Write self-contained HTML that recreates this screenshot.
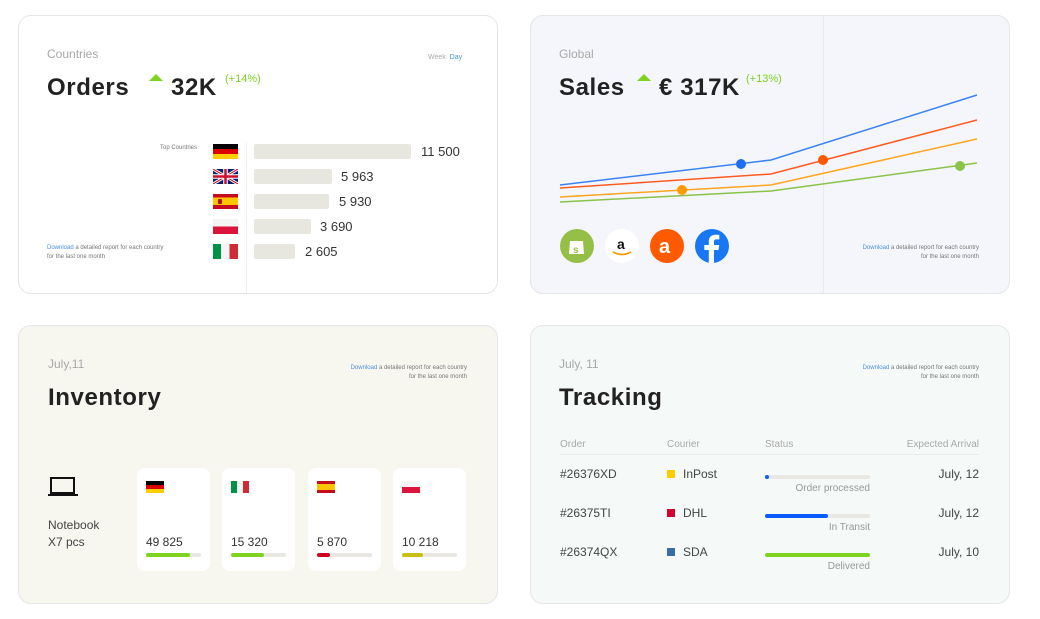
<!DOCTYPE html>
<html><head><meta charset="utf-8"><style>
*{margin:0;padding:0;box-sizing:border-box}
body{width:1040px;height:619px;background:#fff;font-family:"Liberation Sans",sans-serif;position:relative;overflow:hidden;color:#222}
.a{position:absolute;white-space:nowrap}
.card{position:absolute;border:1px solid #e4e6ea;border-radius:13px}
.lbl{font-size:12px;color:#a8a8a8}
.big{font-size:24px;color:#222;font-weight:bold;letter-spacing:.6px}
.tri{width:0;height:0;border-left:7px solid transparent;border-right:7px solid transparent;border-bottom:7px solid #7ed321}
.pct{font-size:11px;color:#7ed321}
.tiny{font-size:6px;color:#777;line-height:9px}
.tiny b{font-weight:normal;color:#4a90e2}
.bar{position:absolute;height:15px;background:#e8e7df;border-radius:2px}
.num{font-size:13px;color:#333}
.mini{position:absolute;top:468px;width:73px;height:103px;background:#fff;border-radius:8px}
.th{font-size:10px;color:#aaa}
.td{font-size:12px;color:#444}
.sl{font-size:10px;color:#999}
</style></head><body>

<!-- Card 1 -->
<div class="card" style="left:18px;top:15px;width:480px;height:279px;background:#fff"></div>
<div class="a lbl" style="left:47px;top:47px">Countries</div>
<div class="a big" style="left:47px;top:74px">Orders</div>
<div class="a tri" style="left:149px;top:74px"></div>
<div class="a big" style="left:171px;top:74px">32K</div>
<div class="a pct" style="left:225px;top:73px">(+14%)</div>
<div class="a" style="left:428px;top:54px;font-size:7px;color:#aaa">Week&nbsp;&nbsp;<span style="color:#4a90e2">Day</span></div>
<div class="a" style="left:246px;top:143px;width:1px;height:150px;background:#eee"></div>
<div class="a" style="left:160px;top:145px;font-size:6px;color:#777">Top Countries</div>
<div class="a" style="left:213px;top:144px;width:25px;height:15px;background:linear-gradient(#000 33%,#dd0000 33% 66%,#ffce00 66%)"></div>
<svg class="a" style="left:213px;top:169px" width="25" height="15" viewBox="0 0 60 36"><rect width="60" height="36" fill="#012169"/><path d="M0 0L60 36M60 0L0 36" stroke="#fff" stroke-width="7"/><path d="M0 0L60 36M60 0L0 36" stroke="#c8102e" stroke-width="2.5"/><path d="M30 0V36M0 18H60" stroke="#fff" stroke-width="11"/><path d="M30 0V36M0 18H60" stroke="#c8102e" stroke-width="6"/></svg>
<div class="a" style="left:213px;top:194px;width:25px;height:15px;background:linear-gradient(#c60b1e 25%,#ffc400 25% 75%,#c60b1e 75%)"><div style="position:absolute;left:5px;top:5px;width:4px;height:5px;background:#ad1519;border-radius:1px"></div></div>
<div class="a" style="left:213px;top:219px;width:25px;height:15px;background:linear-gradient(#f4f4f4 50%,#dc143c 50%)"></div>
<div class="a" style="left:213px;top:244px;width:25px;height:15px;background:linear-gradient(90deg,#009246 33%,#f4f4f4 33% 66%,#ce2b37 66%)"></div>
<div class="bar" style="left:254px;top:144px;width:157px"></div>
<div class="bar" style="left:254px;top:169px;width:78px"></div>
<div class="bar" style="left:254px;top:194px;width:75px"></div>
<div class="bar" style="left:254px;top:219px;width:57px"></div>
<div class="bar" style="left:254px;top:244px;width:41px"></div>
<div class="a num" style="left:421px;top:144px">11 500</div>
<div class="a num" style="left:341px;top:169px">5 963</div>
<div class="a num" style="left:339px;top:194px">5 930</div>
<div class="a num" style="left:320px;top:219px">3 690</div>
<div class="a num" style="left:305px;top:244px">2 605</div>
<div class="a tiny" style="left:47px;top:244px"><b>Download</b> a detailed report for each country<br>for the last one month</div>

<!-- Card 2 -->
<div class="card" style="left:530px;top:15px;width:480px;height:279px;background:#f4f6fb"></div>
<div class="a" style="left:823px;top:16px;width:1px;height:277px;background:#e8eaef"></div>
<div class="a lbl" style="left:559px;top:47px">Global</div>
<div class="a big" style="left:559px;top:74px">Sales</div>
<div class="a tri" style="left:637px;top:74px"></div>
<div class="a big" style="left:659px;top:74px">€ 317K</div>
<div class="a pct" style="left:746px;top:73px">(+13%)</div>
<svg class="a" style="left:0;top:0" width="1040" height="300">
<g fill="none" stroke-width="1.5">
<path d="M560 185L771 160L977 95" stroke="#3b82f6"/>
<path d="M560 188L771 174L977 120" stroke="#ff5a1f"/>
<path d="M560 197L771 185L977 139" stroke="#ffa51f"/>
<path d="M560 202L771 191L977 163" stroke="#8bc34a"/>
</g>
<circle cx="741" cy="164" r="5" fill="#1f6ff2"/>
<circle cx="823" cy="160" r="5" fill="#ff5a00"/>
<circle cx="682" cy="190" r="5" fill="#ff9a00"/>
<circle cx="960" cy="166" r="5" fill="#8bc34a"/>
<circle cx="577" cy="246" r="17" fill="#95bf47"/>
<path d="M570 241h13l1 13h-15z" fill="#fff"/><text x="573" y="253" font-size="10" font-weight="bold" fill="#95bf47" font-family="Liberation Sans">s</text>
<circle cx="622" cy="246" r="17" fill="#fff"/>
<text x="617" y="249" font-size="14" font-weight="bold" fill="#111" font-family="Liberation Sans">a</text>
<path d="M613 252q9 5 18 0" stroke="#ff9900" stroke-width="1.8" fill="none"/>
<circle cx="667" cy="246" r="17" fill="#ff5a00"/>
<text x="659" y="253" font-size="20" font-weight="bold" fill="#fff" font-family="Liberation Sans">a</text>
<circle cx="712" cy="246" r="17" fill="#1877f2"/>
<path d="M714 263v-13h4.5l.7-5h-5.2v-3.2c0-1.4.5-2.4 2.5-2.4h2.8v-4.5c-.5-.1-2.1-.2-4-.2-4 0-6.5 2.4-6.5 6.8v3.5h-4.5v5h4.5v13z" fill="#fff"/>
</svg>
<div class="a tiny" style="right:61px;top:244px;text-align:right"><b>Download</b> a detailed report for each country<br>for the last one month</div>

<!-- Card 3 -->
<div class="card" style="left:18px;top:325px;width:480px;height:279px;background:#f7f6ef"></div>
<div class="a lbl" style="left:48px;top:357px">July,11</div>
<div class="a big" style="left:48px;top:384px">Inventory</div>
<div class="a tiny" style="right:573px;top:364px;text-align:right"><b>Download</b> a detailed report for each country<br>for the last one month</div>
<svg class="a" style="left:47px;top:476px" width="32" height="22"><rect x="4" y="2" width="23" height="15" fill="none" stroke="#111" stroke-width="2"/><rect x="1" y="18" width="30" height="2" fill="#111"/></svg>
<div class="a" style="left:48px;top:517px;font-size:12px;color:#444;line-height:17px">Notebook<br>X7 pcs</div>
<div class="mini" style="left:137px"></div>
<div class="mini" style="left:222px"></div>
<div class="mini" style="left:308px"></div>
<div class="mini" style="left:393px"></div>
<div class="a" style="left:146px;top:481px;width:18px;height:12px;background:linear-gradient(#000 33%,#dd0000 33% 66%,#ffce00 66%)"></div>
<div class="a" style="left:231px;top:481px;width:18px;height:12px;background:linear-gradient(90deg,#009246 33%,#f4f4f4 33% 66%,#ce2b37 66%)"></div>
<div class="a" style="left:317px;top:481px;width:18px;height:12px;background:linear-gradient(#c60b1e 25%,#ffc400 25% 75%,#c60b1e 75%)"></div>
<div class="a" style="left:402px;top:481px;width:18px;height:12px;background:linear-gradient(#f4f4f4 50%,#dc143c 50%)"></div>
<div class="a num" style="left:146px;top:535px;font-size:12px">49 825</div>
<div class="a num" style="left:231px;top:535px;font-size:12px">15 320</div>
<div class="a num" style="left:317px;top:535px;font-size:12px">5 870</div>
<div class="a num" style="left:402px;top:535px;font-size:12px">10 218</div>
<div class="a" style="left:146px;top:553px;width:55px;height:4px;background:#e8e7e2;border-radius:2px"><div style="width:44px;height:4px;background:#7ed321;border-radius:2px"></div></div>
<div class="a" style="left:231px;top:553px;width:55px;height:4px;background:#e8e7e2;border-radius:2px"><div style="width:33px;height:4px;background:#7ed321;border-radius:2px"></div></div>
<div class="a" style="left:317px;top:553px;width:55px;height:4px;background:#e8e7e2;border-radius:2px"><div style="width:13px;height:4px;background:#d0021b;border-radius:2px"></div></div>
<div class="a" style="left:402px;top:553px;width:55px;height:4px;background:#e8e7e2;border-radius:2px"><div style="width:21px;height:4px;background:#c8c011;border-radius:2px"></div></div>

<!-- Card 4 -->
<div class="card" style="left:530px;top:325px;width:480px;height:279px;background:#f5f9f8"></div>
<div class="a lbl" style="left:559px;top:357px">July, 11</div>
<div class="a big" style="left:559px;top:384px">Tracking</div>
<div class="a tiny" style="right:61px;top:364px;text-align:right"><b>Download</b> a detailed report for each country<br>for the last one month</div>
<div class="a th" style="left:560px;top:439px">Order</div>
<div class="a th" style="left:667px;top:439px">Courier</div>
<div class="a th" style="left:765px;top:439px">Status</div>
<div class="a th" style="right:61px;top:439px">Expected Arrival</div>
<div class="a" style="left:560px;top:454px;width:419px;height:1px;background:#e8ecec"></div>

<div class="a td" style="left:560px;top:467px">#26376XD</div>
<div class="a" style="left:667px;top:470px;width:8px;height:8px;background:#ffcc00"></div>
<div class="a td" style="left:683px;top:467px">InPost</div>
<div class="a" style="left:765px;top:475px;width:105px;height:4px;background:#e8e7e2;border-radius:2px"><div style="width:4px;height:4px;background:#0b5cff;border-radius:2px"></div></div>
<div class="a sl" style="right:170px;top:483px">Order processed</div>
<div class="a td" style="right:61px;top:467px">July, 12</div>

<div class="a td" style="left:560px;top:506px">#26375TI</div>
<div class="a" style="left:667px;top:509px;width:8px;height:8px;background:#d40031"></div>
<div class="a td" style="left:683px;top:506px">DHL</div>
<div class="a" style="left:765px;top:514px;width:105px;height:4px;background:#e8e7e2;border-radius:2px"><div style="width:63px;height:4px;background:#0b5cff;border-radius:2px"></div></div>
<div class="a sl" style="right:170px;top:522px">In Transit</div>
<div class="a td" style="right:61px;top:506px">July, 12</div>

<div class="a td" style="left:560px;top:545px">#26374QX</div>
<div class="a" style="left:667px;top:548px;width:8px;height:8px;background:#3a6ea5"></div>
<div class="a td" style="left:683px;top:545px">SDA</div>
<div class="a" style="left:765px;top:553px;width:105px;height:4px;background:#7ed321;border-radius:2px"></div>
<div class="a sl" style="right:170px;top:561px">Delivered</div>
<div class="a td" style="right:61px;top:545px">July, 10</div>
</body></html>
